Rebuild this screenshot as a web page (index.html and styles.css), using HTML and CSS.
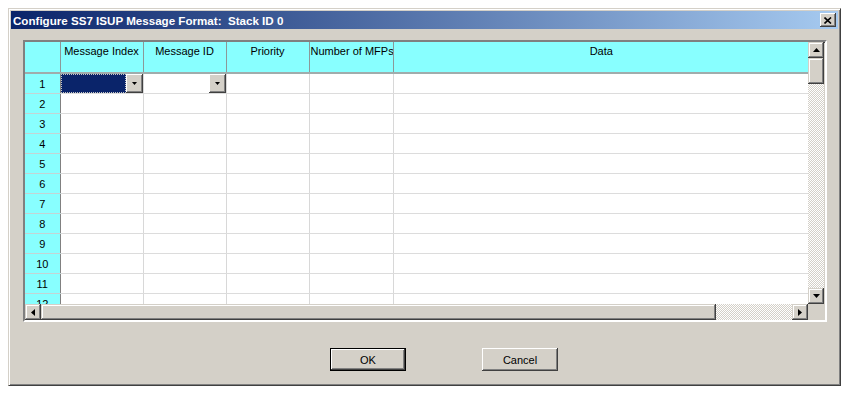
FILE: index.html
```html
<!DOCTYPE html>
<html lang="en">
<head>
    <meta charset="UTF-8">
    <title>Configure SS7 ISUP Message Format</title>
    <link rel="stylesheet" href="styles.css">
</head>
<body>
    <div class="dialog">
        <div class="titlebar">
            <span class="title">Configure SS7 ISUP Message Format:&nbsp; Stack ID 0</span>
            <span class="close">
                <svg width="8" height="7" viewBox="0 0 8 7"><path d="M0.5 0.5 L7 6.5 M7 0.5 L0.5 6.5" stroke="#000" stroke-width="1.6" fill="none"/></svg>
            </span>
        </div>

        <div class="client">
            <div class="grid-frame">
                <div class="grid-view">
                    <table class="grid">
                        <thead>
                            <tr>
                                <th class="rowhead"></th>
                                <th>Message Index</th>
                                <th>Message ID</th>
                                <th>Priority</th>
                                <th>Number of MFPs</th>
                                <th>Data</th>
                            </tr>
                        </thead>
                        <tbody id="grid-body">
                            <tr>
                                <td class="rowhead">1</td>
                                <td class="combo selected"><span class="combo-text"></span><span class="drop"><svg width="5" height="3" viewBox="0 0 5 3"><path d="M0 0 H5 L2.5 3 Z" fill="#000"/></svg></span></td>
                                <td class="combo"><span class="combo-text"></span><span class="drop"><svg width="5" height="3" viewBox="0 0 5 3"><path d="M0 0 H5 L2.5 3 Z" fill="#000"/></svg></span></td>
                                <td></td>
                                <td></td>
                                <td></td>
                            </tr>
                            <tr><td class="rowhead">2</td><td></td><td></td><td></td><td></td><td></td></tr>
                            <tr><td class="rowhead">3</td><td></td><td></td><td></td><td></td><td></td></tr>
                            <tr><td class="rowhead">4</td><td></td><td></td><td></td><td></td><td></td></tr>
                            <tr><td class="rowhead">5</td><td></td><td></td><td></td><td></td><td></td></tr>
                            <tr><td class="rowhead">6</td><td></td><td></td><td></td><td></td><td></td></tr>
                            <tr><td class="rowhead">7</td><td></td><td></td><td></td><td></td><td></td></tr>
                            <tr><td class="rowhead">8</td><td></td><td></td><td></td><td></td><td></td></tr>
                            <tr><td class="rowhead">9</td><td></td><td></td><td></td><td></td><td></td></tr>
                            <tr><td class="rowhead">10</td><td></td><td></td><td></td><td></td><td></td></tr>
                            <tr><td class="rowhead">11</td><td></td><td></td><td></td><td></td><td></td></tr>
                            <tr><td class="rowhead">12</td><td></td><td></td><td></td><td></td><td></td></tr>
                        </tbody>
                    </table>
                </div>

                <!-- vertical scrollbar -->
                <div class="vscroll">
                    <span class="sb-btn"><svg width="7" height="4" viewBox="0 0 7 4"><path d="M3.5 0 L7 4 H0 Z" fill="#000"/></svg></span>
                    <span class="sb-thumb v"></span>
                    <span class="sb-track"></span>
                    <span class="sb-btn"><svg width="7" height="4" viewBox="0 0 7 4"><path d="M0 0 H7 L3.5 4 Z" fill="#000"/></svg></span>
                </div>

                <!-- horizontal scrollbar -->
                <div class="hscroll">
                    <span class="sb-btn"><svg width="4" height="7" viewBox="0 0 4 7"><path d="M0 3.5 L4 0 V7 Z" fill="#000"/></svg></span>
                    <span class="sb-thumb h"></span>
                    <span class="sb-track"></span>
                    <span class="sb-btn"><svg width="4" height="7" viewBox="0 0 4 7"><path d="M0 0 L4 3.5 L0 7 Z" fill="#000"/></svg></span>
                </div>
                <div class="corner"></div>
            </div>

            <div class="buttons">
                <button class="btn default">OK</button>
                <button class="btn">Cancel</button>
            </div>
        </div>
    </div>
</body>
</html>
```

FILE: styles.css
```css
* {
    margin: 0;
    padding: 0;
    box-sizing: border-box;
}
body {
    background: #fff;
    font-family: "Liberation Sans", Arial, sans-serif;
    font-size: 11px;
    color: #000;
}

/* window frame */
.dialog {
    margin: 8px 0 0 8px;
    width: 833px;
    height: 378px;
    background: #d4d0c8;
    border-style: solid;
    border-width: 1px;
    border-color: #d4d0c8 #404040 #404040 #d4d0c8;
    box-shadow: inset 1px 1px 0 #fff, inset -1px -1px 0 #808080;
    padding: 2px;
}
.titlebar {
    height: 18px;
    background: linear-gradient(90deg, #0a246a, #a6caf0);
    display: flex;
    align-items: center;
    justify-content: space-between;
    padding: 0 2px 0 2px;
}
.title {
    color: #fff;
    font-weight: bold;
    font-size: 11.6px;
}
.close {
    width: 16px;
    height: 14px;
    background: #d4d0c8;
    display: flex;
    align-items: center;
    justify-content: center;
    box-shadow: inset -1px -1px 0 #404040, inset 1px 1px 0 #fff, inset -2px -2px 0 #808080;
}

.client {
    padding: 11px 0 0 12px;
}

/* grid control */
.grid-frame {
    width: 804px;
    height: 282px;
    border-style: solid;
    border-width: 2px;
    border-color: #808080 #fff #fff #808080;
    box-shadow: inset 1px 1px 0 #404040;
    display: grid;
    grid-template-columns: 783px 16px;
    grid-template-rows: 262px 16px;
    background: #d4d0c8;
}
.grid-view {
    overflow: hidden;
    background: #fff;
}
.grid {
    border-collapse: collapse;
    table-layout: fixed;
    width: 784px;
}
.grid th {
    height: 31px;
    background: #88ffff;
    font-weight: normal;
    vertical-align: top;
    padding-top: 3px;
    text-align: center;
    border-right: 1px solid #8c9898;
    border-bottom: 2px solid #a0acac;
    white-space: nowrap;
    overflow: hidden;
}
.grid th:nth-child(1) { width: 35px; }
.grid th:nth-child(2) { width: 83px; }
.grid th:nth-child(3) { width: 83px; }
.grid th:nth-child(4) { width: 83px; }
.grid th:nth-child(5) { width: 84px; text-align: left; padding-left: 1px; }
.grid th:nth-child(6) { width: 416px; border-right: none; }

.grid td {
    height: 20px;
    border-right: 1px solid #d8d8d8;
    border-bottom: 1px solid #dcdcdc;
    padding: 0;
}
.grid td.rowhead {
    background: #88ffff;
    text-align: center;
    border-right: 1px solid #808080;
    border-bottom: 1px solid #c4d4d4;
    padding-top: 1px;
}

.combo {
    position: relative;
}
.combo-text {
    display: block;
    height: 19px;
    margin-right: 17px;
}
.combo.selected .combo-text {
    background: #0a246a;
    outline: 1px dotted #c8c8c8;
    outline-offset: -1px;
}
.drop {
    position: absolute;
    right: 0;
    top: 0;
    width: 17px;
    height: 19px;
    background: #d4d0c8;
    display: flex;
    align-items: center;
    justify-content: center;
    box-shadow: inset -1px -1px 0 #404040, inset 1px 1px 0 #fff, inset -2px -2px 0 #808080;
}

/* scrollbars */
.vscroll, .hscroll {
    display: flex;
}
.vscroll {
    flex-direction: column;
    width: 16px;
}
.sb-btn {
    flex: none;
    width: 16px;
    height: 16px;
    background: #d4d0c8;
    display: flex;
    align-items: center;
    justify-content: center;
    box-shadow: inset -1px -1px 0 #404040, inset 1px 1px 0 #d4d0c8, inset -2px -2px 0 #808080, inset 2px 2px 0 #fff;
}
.sb-thumb {
    flex: none;
    background: #d4d0c8;
    box-shadow: inset -1px -1px 0 #404040, inset 1px 1px 0 #d4d0c8, inset -2px -2px 0 #808080, inset 2px 2px 0 #fff;
}
.sb-thumb.v { height: 26px; }
.sb-thumb.h { width: 675px; }
.sb-track {
    flex: 1;
    background: repeating-conic-gradient(#d4d0c8 0 25%, #fff 0 50%) 0 0 / 2px 2px;
}
.corner {
    background: #d4d0c8;
}

/* dialog buttons */
.buttons {
    display: flex;
    gap: 76px;
    padding: 26px 0 0 307px;
}
.btn {
    width: 76px;
    height: 23px;
    background: #d4d0c8;
    font-family: "Liberation Sans", Arial, sans-serif;
    font-size: 11px;
    color: #000;
    border: none;
    box-shadow: inset -1px -1px 0 #404040, inset 1px 1px 0 #fff, inset -2px -2px 0 #808080;
}
.btn.default {
    border: 1px solid #000;
}
```
